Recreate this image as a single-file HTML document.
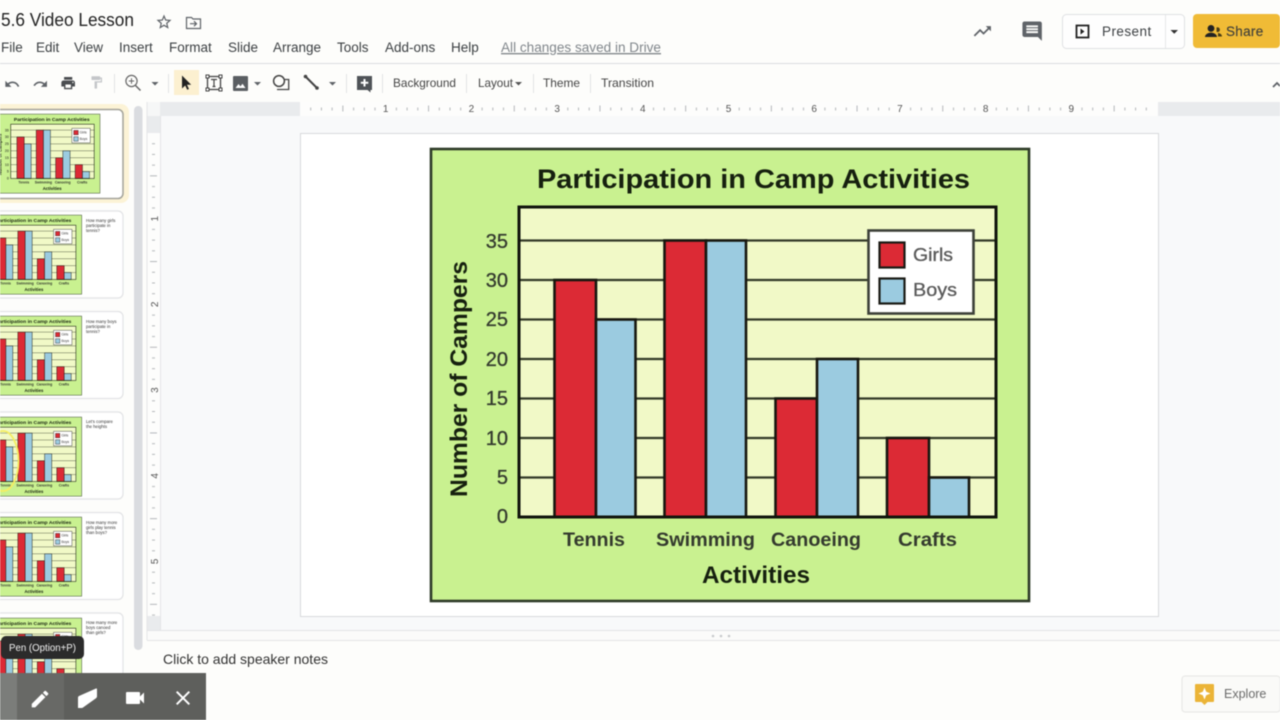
<!DOCTYPE html>
<html><head><meta charset="utf-8"><title>5.6 Video Lesson</title>
<style>
html,body{margin:0;padding:0;width:1280px;height:720px;overflow:hidden;background:#fdfdfb}
svg{display:block;font-family:"Liberation Sans",Arial,sans-serif;filter:blur(.5px)}
.m{font-size:13.5px;fill:#3c4043}
.b{font-size:12px;fill:#444}
.r{font-size:10px;fill:#555;text-anchor:middle}
.n{font-size:20px;fill:#343a2e;text-anchor:end;stroke:#343a2e;stroke-width:.3}
.l{font-size:19px;fill:#343a2e;font-weight:bold}
.h{font-weight:bold;fill:#16200f}
.t{font-size:4.3px;fill:#333}
</style></head><body>
<svg width="1280" height="720" viewBox="0 0 1280 720" xmlns="http://www.w3.org/2000/svg">
<defs>
<pattern id="hr" x="300" y="102" width="85.7" height="14" patternUnits="userSpaceOnUse">
<path d="M10.7 5.500v3M21.400 5.500v3M32.100 5.500v3M42.850 3.500v6M53.600 5.500v3M64.300 5.500v3M75 5.500v3" stroke="#b4b7ba" stroke-width="1"/></pattern>
<pattern id="vr" x="147" y="133" width="14" height="85.7" patternUnits="userSpaceOnUse">
<path d="M5 10.700h3M5 21.400h3M5 32.100h3M3 42.850h7M5 53.600h3M5 64.300h3M5 75h3" stroke="#b4b7ba" stroke-width="1"/></pattern>
<g id="chart">
<rect x="431" y="149" width="598" height="452" fill="#c9f190" stroke="#2e3a28" stroke-width="2.6"/>
<rect x="519" y="207" width="477" height="310" fill="#f1f9c7"/>
<path d="M519 240.500H996M519 280H996M519 319.500H996M519 359H996M519 398.500H996M519 438H996M519 477.500H996" stroke="#333a28" stroke-width="2.200"/>
<g stroke="#17170f" stroke-width="2.600">
<rect x="554.500" y="280" width="41.500" height="237" fill="#dc2a35"/>
<rect x="596" y="319.500" width="39.500" height="197.500" fill="#9bcbe0"/>
<rect x="664.500" y="240.500" width="41.500" height="276.500" fill="#dc2a35"/>
<rect x="706" y="240.500" width="40" height="276.500" fill="#9bcbe0"/>
<rect x="775.500" y="398.500" width="41.500" height="118.500" fill="#dc2a35"/>
<rect x="817" y="359" width="41" height="158" fill="#9bcbe0"/>
<rect x="887" y="438" width="42" height="79" fill="#dc2a35"/>
<rect x="929" y="477.500" width="40" height="39.500" fill="#9bcbe0"/>
</g>
<rect x="519" y="207" width="477" height="310" fill="none" stroke="#10140c" stroke-width="3"/>
<rect x="868.500" y="230.500" width="105" height="83" fill="#fff" stroke="#3c4038" stroke-width="2.600"/>
<rect x="879.500" y="242.500" width="25" height="25" fill="#dc2a35" stroke="#1a1a14" stroke-width="2.200"/>
<rect x="879.500" y="278.500" width="25" height="25" fill="#9bcbe0" stroke="#1a1a14" stroke-width="2.200"/>
<text x="913" y="261" font-size="18" fill="#5a5a5a" stroke="#5a5a5a" stroke-width=".3" textLength="40" lengthAdjust="spacingAndGlyphs">Girls</text>
<text x="913" y="296" font-size="18" fill="#5a5a5a" stroke="#5a5a5a" stroke-width=".3" textLength="44" lengthAdjust="spacingAndGlyphs">Boys</text>
<text class="h" x="537" y="188" font-size="27" textLength="433" lengthAdjust="spacingAndGlyphs">Participation in Camp Activities</text>
<text class="h" transform="translate(467 497) rotate(-90)" font-size="24" textLength="236" lengthAdjust="spacingAndGlyphs">Number of Campers</text>
<text class="h" x="702" y="583" font-size="24" textLength="108" lengthAdjust="spacingAndGlyphs">Activities</text>
<text class="n" x="508" y="248">35</text><text class="n" x="508" y="287">30</text><text class="n" x="508" y="326">25</text><text class="n" x="508" y="366">20</text><text class="n" x="508" y="405">15</text><text class="n" x="508" y="445">10</text><text class="n" x="508" y="484">5</text><text class="n" x="508" y="523">0</text>
<text class="l" x="563" y="546" textLength="62" lengthAdjust="spacingAndGlyphs">Tennis</text>
<text class="l" x="656" y="546" textLength="99" lengthAdjust="spacingAndGlyphs">Swimming</text>
<text class="l" x="771" y="546" textLength="90" lengthAdjust="spacingAndGlyphs">Canoeing</text>
<text class="l" x="898" y="546" textLength="59" lengthAdjust="spacingAndGlyphs">Crafts</text>
</g>
</defs>

<rect width="1280" height="720" fill="#fdfdfb"/>

<!-- title + menu -->
<text x="1" y="26" font-size="18" fill="#222" textLength="133" lengthAdjust="spacingAndGlyphs">5.6 Video Lesson</text>
<path transform="translate(155 13) scale(.75)" fill="#5f6368" d="M22 9.240l-7.190-.62L12 2 9.190 8.630 2 9.240l5.460 4.730L5.820 21 12 17.270 18.180 21l-1.630-7.030L22 9.240zM12 15.400l-3.760 2.270 1-4.280-3.320-2.880 4.380-.38L12 6.100l1.710 4.040 4.380.38-3.320 2.880 1 4.280L12 15.400z"/>
<path d="M186.500 17.500h5l1.500 1.500h7.500v9.500h-14zM190 23.700h6.500M194 21.200l2.500 2.500-2.500 2.500" fill="none" stroke="#5f6368" stroke-width="1.200"/>
<text class="m" x="1" y="52">File</text><text class="m" x="36" y="52">Edit</text><text class="m" x="74" y="52">View</text><text class="m" x="119" y="52">Insert</text><text class="m" x="169" y="52">Format</text><text class="m" x="228" y="52">Slide</text><text class="m" x="273" y="52">Arrange</text><text class="m" x="337" y="52">Tools</text><text class="m" x="385" y="52">Add-ons</text><text class="m" x="451" y="52">Help</text>
<text x="501" y="52" font-size="13.500" fill="#80868b" text-decoration="underline" textLength="160" lengthAdjust="spacingAndGlyphs">All changes saved in Drive</text>

<!-- right header -->
<path transform="translate(972 21) scale(.86)" fill="#5f6368" d="M16 6l2.290 2.290-4.880 4.880-4-4L2 16.590 3.410 18l6-6 4 4 6.300-6.290L22 12V6z"/>
<path transform="translate(1020.500 19.500) scale(.97)" fill="#5f6368" d="M21.990 4c0-1.100-.89-2-1.990-2H4c-1.100 0-2 .9-2 2v12c0 1.100.9 2 2 2h14l4 4-.01-18zM18 14H6v-2h12v2zm0-3H6V9h12v2zm0-3H6V6h12v2z"/>
<rect x="1062.500" y="14.500" width="122" height="34" rx="4" fill="#fefefe" stroke="#dfe1e3"/>
<path d="M1165.500 15v33" stroke="#e6e7e8"/>
<rect x="1076.500" y="25.500" width="12" height="12" fill="none" stroke="#222" stroke-width="1.800"/>
<path d="M1080.500 28.500v6l4-3z" fill="#222"/>
<text x="1102" y="36" font-size="13.500" fill="#3c4043" letter-spacing=".45">Present</text>
<path d="M1170.500 30h7.500l-3.750 3.700z" fill="#333"/>
<rect x="1193" y="14" width="87" height="34" rx="4" fill="#f0bb36"/>
<path d="M1211 25a3.400 3.400 0 1 0 .01 0zM1205 37c0-3 3.500-4.400 6-4.400s6 1.400 6 4.400z" fill="#222"/>
<path d="M1216.500 27.500a2.400 2.400 0 1 1 .1 4.400zM1218 33c2 .3 4 1.300 4 3.500h-4z" fill="#4a3d14"/>
<text x="1226" y="36" font-size="13.500" fill="#45433a" stroke="#45433a" stroke-width=".2" letter-spacing=".3">Share</text>

<path d="M0 63.500H1280" stroke="#dadce0"/>

<!-- toolbar -->
<g fill="#5f6368">
<path transform="translate(4 76) scale(.68)" d="M12.500 8c-2.650 0-5.050.99-6.900 2.600L2 7v9h9l-3.620-3.620c1.390-1.160 3.160-1.880 5.120-1.880 3.540 0 6.550 2.310 7.600 5.500l2.370-.78C21.080 11.030 17.150 8 12.500 8z"/>
<path transform="translate(32 76) scale(.68)" d="M18.400 10.600C16.550 8.990 14.150 8 11.500 8c-4.160 0-7.740 2.420-9.440 5.930l2.360.78C5.490 12.310 8.260 10.500 11.500 10.500c1.960 0 3.730.72 5.120 1.880L13 16h9V7l-3.600 3.600z"/>
<path transform="translate(60 75) scale(.68)" fill="#4a4d50" d="M19 8H5c-1.660 0-3 1.340-3 3v6h4v4h12v-4h4v-6c0-1.660-1.340-3-3-3zm-3 11H8v-5h8v5zm3-7c-.55 0-1-.45-1-1s.45-1 1-1 1 .45 1 1-.45 1-1 1zm-1-9H6v4h12V3z"/>
<path transform="translate(89 75) scale(.62)" fill="#c4c6c9" d="M18 4V3c0-.55-.45-1-1-1H5c-.55 0-1 .45-1 1v4c0 .55.45 1 1 1h12c.55 0 1-.45 1-1V6h1v4H9v11c0 .55.45 1 1 1h2c.55 0 1-.45 1-1v-9h8V4h-3z"/>
<path d="M151.500 82h7l-3.500 3.500zM254 82h7l-3.500 3.500zM329 82h7l-3.500 3.500z"/>
</g>
<circle cx="131.500" cy="81" r="5.600" fill="none" stroke="#666" stroke-width="1.200"/>
<path d="M135.500 85.500l5 5" stroke="#666" stroke-width="1.500"/>
<path d="M128.800 81h5.400M131.500 78.300v5.400" stroke="#666" stroke-width="1"/>
<path d="M114.500 74v19M168.500 74v19M346.500 74v19M382.500 74v19M466.500 74v19M533.500 74v19M590.500 74v19" stroke="#e2e3e5"/>
<rect x="174" y="70" width="25" height="25" fill="#fcf0d0"/>
<path d="M182 75.500v13l3.200-3 2 4.300 1.800-.8-2-4.300h4.200z" fill="#222"/>
<rect x="207.500" y="76.500" width="13" height="13" fill="none" stroke="#444" stroke-width="1.300"/>
<g fill="#fff" stroke="#444"><rect x="206" y="75" width="3" height="3"/><rect x="219" y="75" width="3" height="3"/><rect x="206" y="88" width="3" height="3"/><rect x="219" y="88" width="3" height="3"/></g>
<path d="M211 79.500h6M214 79.500v7M212.500 86.500h3" stroke="#444" stroke-width="1.200" fill="none"/>
<rect x="233" y="76" width="15" height="15" rx="1" fill="#5a5e62"/>
<path d="M235.500 88l3-4 2 2.400 2-2.700 3 4.300z" fill="#fff"/>
<circle cx="279" cy="81" r="5.400" fill="none" stroke="#444" stroke-width="1.500"/>
<path d="M284.500 79.500h4.200v10h-11.700" fill="none" stroke="#444" stroke-width="1.300"/>
<path d="M305.500 76.500l11.500 11.500" stroke="#444" stroke-width="2"/>
<circle cx="305.500" cy="76.500" r="1.800" fill="#444"/><circle cx="317" cy="88" r="1.800" fill="#444"/>
<path d="M357 76h15v14h-1.500v2.500l-3-2.500h-10.500z" fill="#4f5357"/>
<path d="M364.500 79v7.500M360.800 82.700h7.500" stroke="#fff" stroke-width="2"/>
<text class="b" x="393" y="87" textLength="63" lengthAdjust="spacingAndGlyphs">Background</text>
<text class="b" x="478" y="87" textLength="35" lengthAdjust="spacingAndGlyphs">Layout</text>
<text class="b" x="543" y="87" textLength="37" lengthAdjust="spacingAndGlyphs">Theme</text>
<text class="b" x="601" y="87" textLength="53" lengthAdjust="spacingAndGlyphs">Transition</text>
<path d="M515 82h7l-3.500 3.500z" fill="#555"/>
<path d="M1273 87l4-4 3 3" fill="none" stroke="#5f6368" stroke-width="1.800"/>

<!-- canvas + rulers -->
<rect x="147" y="102" width="1133" height="528" fill="#f8f9fa"/>
<rect x="160" y="102" width="1120" height="14" fill="#e9ebed"/>
<rect x="147" y="102" width="13" height="14" fill="#f6f7f7"/>
<rect x="300" y="102" width="858" height="14" fill="#fdfdfc"/>
<rect x="300" y="102" width="858" height="14" fill="url(#hr)"/>
<rect x="147" y="116" width="13" height="514" fill="#e9ebed"/>
<rect x="147" y="133" width="13" height="483" fill="#fdfdfc"/>
<rect x="147" y="133" width="13" height="483" fill="url(#vr)"/>
<path d="M147 102v538M160.500 116v514" stroke="#e4e5e7"/>
<text class="r" x="385.700" y="112">1</text><text class="r" x="471.400" y="112">2</text><text class="r" x="557.100" y="112">3</text><text class="r" x="642.800" y="112">4</text><text class="r" x="728.500" y="112">5</text><text class="r" x="814.200" y="112">6</text><text class="r" x="899.900" y="112">7</text><text class="r" x="985.600" y="112">8</text><text class="r" x="1071.300" y="112">9</text>
<text class="r" transform="translate(158 218.700) rotate(-90)">1</text><text class="r" transform="translate(158 304.400) rotate(-90)">2</text><text class="r" transform="translate(158 390.100) rotate(-90)">3</text><text class="r" transform="translate(158 475.800) rotate(-90)">4</text><text class="r" transform="translate(158 561.500) rotate(-90)">5</text>

<!-- slide -->
<rect x="300.500" y="133.500" width="858" height="483" fill="#fff" stroke="#d8dadc"/>
<use href="#chart"/>

<!-- filmstrip -->
<rect x="-10" y="104" width="139" height="99" rx="8" fill="#fcf3d6"/>
<rect x="-30" y="109.500" width="153" height="89" rx="5" fill="#fff" stroke="#a3a39a" stroke-width="1.500"/>
<use href="#chart" transform="translate(-80.100 88) scale(.175)"/>

<rect x="-30" y="211" width="153" height="87" rx="5" fill="#fff" stroke="#e2e3e5" stroke-width="1.200"/>
<use href="#chart" transform="translate(-98.400 189) scale(.175)"/>
<text class="t" x="86" y="222">How many girls</text><text class="t" x="86" y="227">participate in</text><text class="t" x="86" y="232">tennis?</text>

<rect x="-30" y="311.500" width="153" height="87" rx="5" fill="#fff" stroke="#e2e3e5" stroke-width="1.200"/>
<use href="#chart" transform="translate(-98.400 290) scale(.175)"/>
<text class="t" x="86" y="323">How many boys</text><text class="t" x="86" y="328">participate in</text><text class="t" x="86" y="333">tennis?</text>

<rect x="-30" y="412" width="153" height="87" rx="5" fill="#fff" stroke="#e2e3e5" stroke-width="1.200"/>
<use href="#chart" transform="translate(-98.400 391) scale(.175)"/>
<ellipse cx="3" cy="461" rx="15.500" ry="30" fill="none" stroke="#f4ee62" stroke-width="1.800"/>
<text class="t" x="86" y="423">Let's compare</text><text class="t" x="86" y="428">the heights</text>

<rect x="-30" y="512.500" width="153" height="87" rx="5" fill="#fff" stroke="#e2e3e5" stroke-width="1.200"/>
<use href="#chart" transform="translate(-98.400 491) scale(.175)"/>
<text class="t" x="86" y="524">How many more</text><text class="t" x="86" y="529">girls play tennis</text><text class="t" x="86" y="534">than boys?</text>

<rect x="-30" y="613" width="153" height="87" rx="5" fill="#fff" stroke="#e2e3e5" stroke-width="1.200"/>
<use href="#chart" transform="translate(-98.400 592) scale(.175)"/>
<text class="t" x="86" y="624">How many more</text><text class="t" x="86" y="629">boys canoed</text><text class="t" x="86" y="634">than girls?</text>

<rect x="134" y="106" width="8.500" height="544" rx="4.200" fill="#dadce0"/>

<!-- notes -->
<path d="M147 630.500H1280M147 640.500H1280" stroke="#e3e4e6"/>
<rect x="148" y="631" width="1132" height="9" fill="#fbfbfa"/>
<g fill="#c8cacc"><circle cx="713" cy="636" r="1.300"/><circle cx="721" cy="636" r="1.300"/><circle cx="729" cy="636" r="1.300"/></g>
<text x="163" y="664" font-size="14" fill="#333">Click to add speaker notes</text>

<rect x="1182" y="676" width="98" height="36" rx="3" fill="#fafaf8" stroke="#e6e6e4"/>
<path d="M1196 684h17a1 1 0 0 1 1 1v16a1 1 0 0 1-1 1h-5.500l-3 3-3-3h-5.500a1 1 0 0 1-1-1v-16a1 1 0 0 1 1-1z" fill="#ebb437"/>
<path d="M1204.500 687.500l1.700 4.300 4.300 1.700-4.300 1.700-1.700 4.300-1.700-4.300-4.300-1.700 4.300-1.700z" fill="#fff"/>
<text x="1224" y="698" font-size="12.500" fill="#6b6b6b">Explore</text>

<!-- pen tooltip + bar -->
<rect x="1" y="636" width="83" height="23" rx="5" fill="#2b2b2b"/>
<text x="9" y="651" font-size="10" fill="#f2f2f2" textLength="67" lengthAdjust="spacingAndGlyphs">Pen (Option+P)</text>
<rect x="0" y="673" width="206" height="47" fill="#5e5f5c"/>
<rect x="0" y="673" width="17" height="47" fill="#7b7d7a"/>
<rect x="17" y="673" width="47" height="47" fill="#686966"/>
<g fill="#fff">
<path transform="translate(29 688) scale(.92)" d="M3 17.250V21h3.750L17.810 9.940l-3.750-3.750L3 17.250zM20.710 7.040c.39-.39.39-1.020 0-1.410l-2.340-2.340c-.39-.39-1.020-.39-1.410 0l-1.830 1.830 3.750 3.750 1.830-1.830z"/>
<path d="M78 697.500q0-1 1-1.500l17-7.500q1-.4 1 1v7q0 1-1 1.700l-13 9.300q-.5.500-1.500.5h-3.500v-10.500z"/>
<path transform="translate(123 686) scale(1)" d="M17 10.500V7c0-.55-.45-1-1-1H4c-.55 0-1 .45-1 1v10c0 .55.45 1 1 1h12c.55 0 1-.45 1-1v-3.500l4 4v-11l-4 4z"/>
<path transform="translate(171 686)" d="M19 6.410L17.590 5 12 10.590 6.410 5 5 6.410 10.590 12 5 17.590 6.410 19 12 13.410 17.590 19 19 17.590 13.410 12z"/>
</g>
</svg>
</body></html>
